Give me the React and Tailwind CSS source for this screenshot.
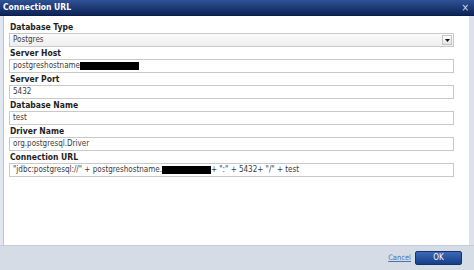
import React from "react";

function Label({ children }) {
  return (
    <div className="h-[12px] leading-[12px] pl-[6px] text-[8.5px] font-bold text-[#1e1e1e]">
      {children}
    </div>
  );
}

function Field({ children }) {
  return (
    <div className="ml-[5px] mr-[15px] h-[14px] border border-[#c9c9c9] bg-white flex items-center pl-[3px] text-[8px] text-[#3a3a3a] whitespace-nowrap overflow-hidden">
      {children}
    </div>
  );
}

function Redact({ w }) {
  return <span className={`inline-block h-[8px] bg-black ${w}`} />;
}

export default function App() {
  return (
    <div className="w-[474px] h-[270px] flex flex-col bg-[#d6dce6] font-['DejaVu_Sans_Condensed','DejaVu_Sans',sans-serif] overflow-hidden">
      <div className="h-[16px] bg-gradient-to-b from-[#2f5296] to-[#0d2457] border-b border-[#0a1d48] flex items-center justify-between pl-[3px] pr-[5px]">
        <span className="text-white font-bold text-[8.5px] leading-none">Connection URL</span>
        <span className="text-[#d8deea] text-[10px] leading-none">×</span>
      </div>
      <div className="flex-1 flex">
        <div className="w-[4px] border-r border-[#bfc6d2] bg-[#e2e6ee]" />
        <div className="flex-1 bg-white pt-[5px]">
          <Label>Database Type</Label>
          <div className="ml-[5px] mr-[15px] h-[14px] border border-[#c9c9c9] bg-gradient-to-b from-[#fbfbfb] to-[#eeeeee] flex items-center pl-[3px] pr-[1px] text-[8px] text-[#3a3a3a]">
            <span className="flex-1">Postgres</span>
            <span className="w-[10px] h-[10px] border border-[#c4c4c4] bg-gradient-to-b from-[#ffffff] to-[#e4e4e4] flex items-center justify-center">
              <svg width="5" height="3" viewBox="0 0 5 3"><path d="M0 0h5L2.5 3z" fill="#111" /></svg>
            </span>
          </div>
          <Label>Server Host</Label>
          <Field>
            <span>postgreshostname</span>
            <Redact w="w-[59px]" />
          </Field>
          <Label>Server Port</Label>
          <Field>5432</Field>
          <Label>Database Name</Label>
          <Field>test</Field>
          <Label>Driver Name</Label>
          <Field>org.postgresql.Driver</Field>
          <Label>Connection URL</Label>
          <Field>
            <span>"jdbc:postgresql://" + postgreshostname.</span>
            <Redact w="w-[49px]" />
            <span>+ ":" + 5432+ "/" + test</span>
          </Field>
        </div>
        <div className="w-[5px] bg-[#dde2ea]" />
      </div>
      <div className="h-[25px] flex items-center justify-end pr-[12px] gap-[4px] border-t border-[#c5ccd8]">
        <span className="text-[7.5px] text-[#4a72b5] underline">Cancel</span>
        <span className="w-[47px] h-[14px] rounded-[2px] border border-[#12336e] bg-gradient-to-b from-[#3b69b6] to-[#163f87] flex items-center justify-center text-white text-[8px] leading-none">OK</span>
      </div>
    </div>
  );
}
